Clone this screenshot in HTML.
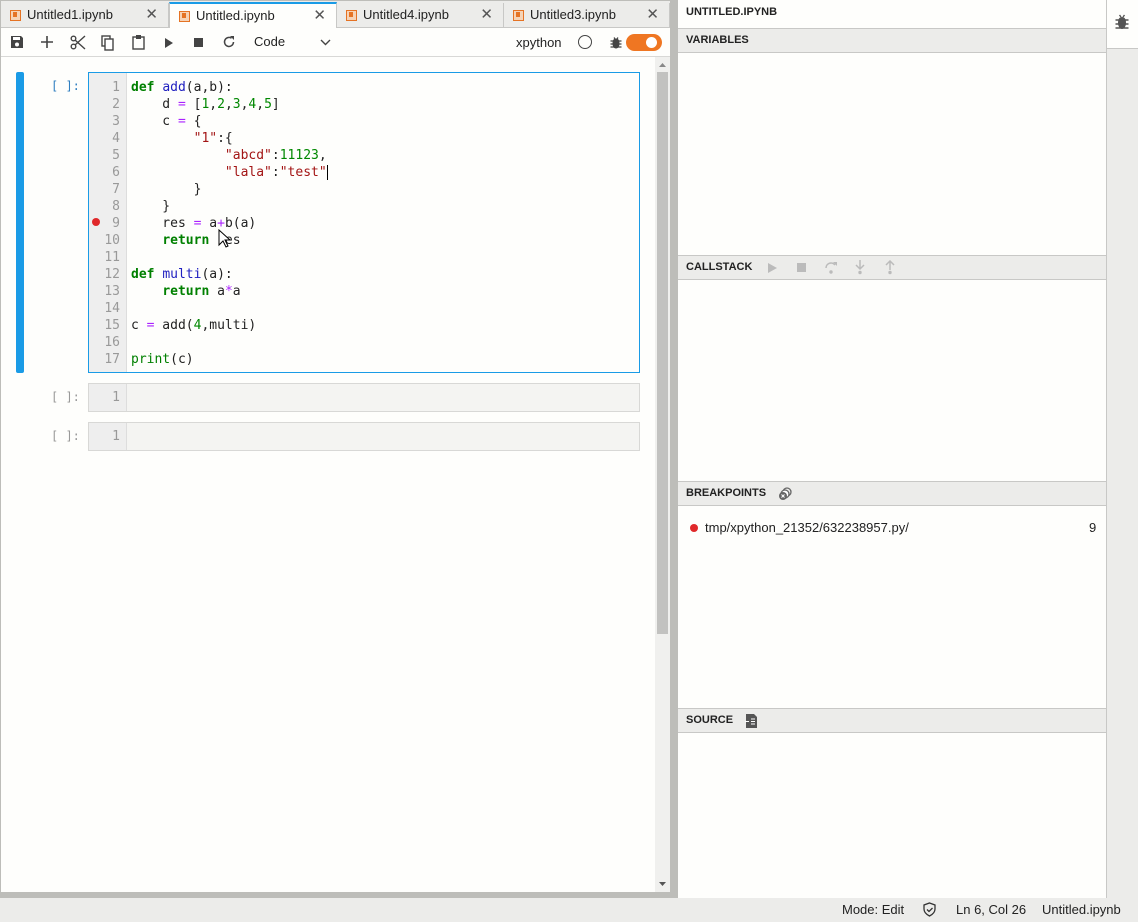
<!DOCTYPE html>
<html><head><meta charset="utf-8"><style>
*{box-sizing:border-box;margin:0;padding:0}
body{width:1138px;height:922px;background:#bdbdb9;font-family:"Liberation Sans",sans-serif;font-size:13px;color:#222;position:relative;overflow:hidden}
.abs{position:absolute}
.nb{left:1px;top:1px;width:669px;height:891px;background:#fefefc}
.tabs{left:0;top:0;width:669px;height:27px;background:#ececea;border-bottom:1px solid #c8c8c6}
.tab{position:absolute;top:2px;height:26px;border-right:1px solid #c8c8c6;font-size:13px;line-height:24px;padding-left:26px}
.tab .ic{position:absolute;left:9px;top:7px;width:11px;height:11px;border:1.5px solid #e57324;background:#f6d3b6}
.tab .ic:after{content:"";position:absolute;left:2px;top:1px;width:4px;height:5px;background:#e57324}
.tab .x{position:absolute;right:10px;top:0;font-size:15px;color:#555}
.tb{left:0;top:27px;width:669px;height:29px;border-bottom:1px solid #d8d8d6;background:#fefefc}
.code{font-family:"DejaVu Sans Mono","Liberation Mono",monospace;font-size:13px;line-height:17px;white-space:pre}
.k{color:#008000;font-weight:bold}.f{color:#2020c0}.n{color:#008800}.s{color:#a31515}.o{color:#aa22ff}
.hdr{position:absolute;left:678px;width:428px;height:25px;background:#ececea;border-top:1px solid #c8c8c6;border-bottom:1px solid #c8c8c6;font-size:11px;font-weight:bold;line-height:23px;padding-left:8px;color:#222}
</style></head><body>
<div class="abs nb">
 <div class="abs tabs">
  <div class="tab" style="left:0;width:168px;top:2px;border-left:none"><span class="ic"></span>Untitled1.ipynb<span class="x">✕</span></div>
  <div class="tab" style="left:168px;width:168px;background:#fefefc;border-top:2px solid #1a9be6;top:1px;height:27px;border-left:1px solid #c8c8c6"><span class="ic"></span>Untitled.ipynb<span class="x">✕</span></div>
  <div class="tab" style="left:336px;width:167px"><span class="ic"></span>Untitled4.ipynb<span class="x">✕</span></div>
  <div class="tab" style="left:503px;width:166px"><span class="ic"></span>Untitled3.ipynb<span class="x">✕</span></div>
 </div>
 <div class="abs tb">
  <svg class="abs" style="left:9px;top:7px" width="14" height="14" viewBox="0 0 14 14"><path d="M1 1h10l2 2v10H1z" fill="#444"/><rect x="3" y="2" width="7" height="3" fill="#fff"/><circle cx="7" cy="9.5" r="2" fill="#fff"/></svg>
  <svg class="abs" style="left:40px;top:8px" width="12" height="12"><path d="M6 0v12M0 6h12" stroke="#444" stroke-width="1.6"/></svg>
  <svg class="abs" style="left:69px;top:7px" width="16" height="15" viewBox="0 0 16 15"><circle cx="3.5" cy="11.5" r="2.3" fill="none" stroke="#444" stroke-width="1.4"/><circle cx="3.5" cy="3.5" r="2.3" fill="none" stroke="#444" stroke-width="1.4"/><path d="M5 5l10 9M5 10l10-9" stroke="#444" stroke-width="1.4"/></svg>
  <svg class="abs" style="left:100px;top:7px" width="14" height="16"><rect x="1" y="1" width="8" height="10" fill="none" stroke="#444" stroke-width="1.4"/><rect x="4" y="4" width="8" height="11" fill="#fff" stroke="#444" stroke-width="1.4"/></svg>
  <svg class="abs" style="left:131px;top:6px" width="14" height="16"><rect x="1" y="3" width="11" height="12" fill="none" stroke="#444" stroke-width="1.4"/><rect x="4" y="1" width="5" height="4" fill="#444"/></svg>
  <svg class="abs" style="left:163px;top:10px" width="10" height="10"><path d="M1 0l8 5-8 5z" fill="#444"/></svg>
  <div class="abs" style="left:193px;top:10px;width:9px;height:9px;background:#444"></div>
  <svg class="abs" style="left:221px;top:7px" width="14" height="14" viewBox="0 0 14 14"><path d="M11.5 7A4.5 4.5 0 1 1 9.5 3.2" fill="none" stroke="#444" stroke-width="1.5"/><path d="M8 1h4v4z" fill="#444"/></svg>
  <div class="abs" style="left:253px;top:6px;font-size:13px">Code</div>
  <svg class="abs" style="left:319px;top:11px" width="11" height="7"><path d="M1 1l4.5 4.5L10 1" fill="none" stroke="#444" stroke-width="1.4"/></svg>
  <div class="abs" style="left:515px;top:7px;font-size:13px">xpython</div>
  <div class="abs" style="left:577px;top:7px;width:14px;height:14px;border:1.5px solid #444;border-radius:50%"></div>
  <svg class="abs" style="left:609px;top:8px" width="12" height="13" viewBox="0 0 12 13"><path d="M6 2.5C3.5 2.5 2.5 4.5 2.5 7.5S4 12.5 6 12.5 9.5 10.5 9.5 7.5 8.5 2.5 6 2.5z" fill="#444"/><path d="M0.5 5h11M0.5 8h11M0.5 11h11" stroke="#444" stroke-width="1.3"/><path d="M4 1.5l1 1.5M8 1.5l-1 1.5" stroke="#444" stroke-width="1.2"/></svg>
  <div class="abs" style="left:625px;top:6px;width:36px;height:17px;background:#ef7622;border-radius:9px"><div class="abs" style="right:5px;top:3px;width:11px;height:11px;border-radius:50%;background:#fff"></div></div>
 </div>
 <div class="abs" style="left:654px;top:56px;width:15px;height:835px;background:#f0f0ee"></div>
 <div class="abs" style="left:656px;top:71px;width:11px;height:562px;background:#c2c2c0"></div>
 <svg class="abs" style="left:657px;top:61px" width="9" height="6"><path d="M1 5l3.5-4 3.5 4z" fill="#888"/></svg>
 <svg class="abs" style="left:657px;top:880px" width="9" height="6"><path d="M1 1l3.5 4 3.5-4z" fill="#555"/></svg>

 <div class="abs" style="left:15px;top:71px;width:8px;height:301px;background:#1a9be6;border-radius:2px"></div>
 <div class="abs code" style="left:50px;top:77px;color:#307fc1;font-size:12px">[ ]:</div>
 <div class="abs" style="left:87px;top:71px;width:552px;height:301px;border:1px solid #1a9be6;background:#fefefc">
  <div class="abs" style="left:0;top:0;width:38px;height:299px;background:#eeeeee;border-right:1px solid #ddd"></div>
  <div class="abs code" style="left:0;top:6px;width:31px;text-align:right;color:#999">1
2
3
4
5
6
7
8
9
10
11
12
13
14
15
16
17</div>
  <div class="abs" style="left:3px;top:145px;width:8px;height:8px;border-radius:50%;background:#e0282a"></div>
  <div class="abs code" style="left:42px;top:6px;color:#222"><span class="k">def</span> <span class="f">add</span>(a,b):
    d <span class="o">=</span> [<span class="n">1</span>,<span class="n">2</span>,<span class="n">3</span>,<span class="n">4</span>,<span class="n">5</span>]
    c <span class="o">=</span> {
        <span class="s">"1"</span>:{
            <span class="s">"abcd"</span>:<span class="n">11123</span>,
            <span class="s">"lala"</span>:<span class="s">"test"</span><span style="border-left:1px solid #000"></span>
        }
    }
    res <span class="o">=</span> a<span class="o">+</span>b(a)
    <span class="k">return</span> res

<span class="k">def</span> <span class="f">multi</span>(a):
    <span class="k">return</span> a<span class="o">*</span>a

c <span class="o">=</span> add(<span class="n">4</span>,multi)

<span style="color:#008000">print</span>(c)</div>
  <svg class="abs" style="left:129px;top:156px" width="14" height="20"><path d="M1 1v15l4-4 3 6 2-1-3-6h5z" fill="#fff" stroke="#000" stroke-width="1"/></svg>
 </div>

 <div class="abs code" style="left:50px;top:388px;color:#999;font-size:12px">[ ]:</div>
 <div class="abs" style="left:87px;top:382px;width:552px;height:29px;border:1px solid #d8d8d6;background:#f4f4f2">
  <div class="abs" style="left:0;top:0;width:38px;height:27px;background:#eeeeee;border-right:1px solid #ddd"></div>
  <div class="abs code" style="left:0;top:5px;width:31px;text-align:right;color:#999">1</div>
 </div>
 <div class="abs code" style="left:50px;top:427px;color:#999;font-size:12px">[ ]:</div>
 <div class="abs" style="left:87px;top:421px;width:552px;height:29px;border:1px solid #d8d8d6;background:#f4f4f2">
  <div class="abs" style="left:0;top:0;width:38px;height:27px;background:#eeeeee;border-right:1px solid #ddd"></div>
  <div class="abs code" style="left:0;top:5px;width:31px;text-align:right;color:#999">1</div>
 </div>
</div>

<div class="abs" style="left:678px;top:0;width:428px;height:898px;background:#fefefc"></div>
<div class="abs" style="left:686px;top:6px;font-size:11px;font-weight:bold">UNTITLED.IPYNB</div>
<div class="hdr" style="top:28px">VARIABLES</div>
<div class="hdr" style="top:255px">CALLSTACK
 <svg class="abs" style="left:90px;top:7px" width="9" height="10"><path d="M0 0l9 5-9 5z" fill="#bbb"/></svg>
 <div class="abs" style="left:119px;top:7px;width:9px;height:9px;background:#bbb"></div>
 <svg class="abs" style="left:146px;top:4px" width="14" height="15"><path d="M2 8a5 5 0 0 1 9-3" fill="none" stroke="#bbb" stroke-width="1.5"/><path d="M9 2h4v4z" fill="#bbb"/><circle cx="7" cy="12" r="1.7" fill="#bbb"/></svg>
 <svg class="abs" style="left:177px;top:4px" width="10" height="15"><path d="M5 0v8M1 5l4 4 4-4" fill="none" stroke="#bbb" stroke-width="1.5"/><circle cx="5" cy="12.5" r="1.7" fill="#bbb"/></svg>
 <svg class="abs" style="left:207px;top:4px" width="10" height="15"><path d="M5 10V1M1 5l4-4 4 4" fill="none" stroke="#bbb" stroke-width="1.5"/><circle cx="5" cy="12.5" r="1.7" fill="#bbb"/></svg>
</div>
<div class="hdr" style="top:481px">BREAKPOINTS
 <svg class="abs" style="left:100px;top:5px" width="14" height="14"><circle cx="9" cy="5" r="4" fill="none" stroke="#666" stroke-width="1.3"/><circle cx="7" cy="7" r="4" fill="#fff" stroke="#666" stroke-width="1.3"/><circle cx="5" cy="9" r="4" fill="#666"/><path d="M3.5 7.5l3 3M6.5 7.5l-3 3" stroke="#fff" stroke-width="1"/></svg>
</div>
<div class="abs" style="left:690px;top:524px;width:8px;height:8px;border-radius:50%;background:#e0282a"></div>
<div class="abs" style="left:705px;top:520px">tmp/xpython_21352/632238957.py/</div>
<div class="abs" style="left:1089px;top:520px">9</div>
<div class="hdr" style="top:708px">SOURCE
 <svg class="abs" style="left:67px;top:5px" width="13" height="14"><path d="M1 0h8l3 3v11H1z" fill="#555"/><path d="M6 5h4M6 7.5h4M6 10h4" stroke="#fff" stroke-width="1"/><path d="M0 7.5h4" stroke="#fff" stroke-width="1"/></svg>
</div>

<div class="abs" style="left:1106px;top:0;width:32px;height:898px;background:#ececea;border-left:1px solid #c8c8c6"></div>
<div class="abs" style="left:1107px;top:0;width:31px;height:49px;background:#fefefc;border-bottom:1px solid #c8c8c6"></div>
<svg class="abs" style="left:1115px;top:14px" width="14" height="16" viewBox="0 0 14 16"><path d="M7 3C4 3 3 5.5 3 9s2 6 4 6 4-2.5 4-6-1-6-4-6z" fill="#555"/><path d="M0.5 6h13M0.5 10h13M0.5 14h13" stroke="#555" stroke-width="1.5"/><path d="M4.5 1l1.5 2M9.5 1L8 3" stroke="#555" stroke-width="1.4"/></svg>

<div class="abs" style="left:0;top:898px;width:1138px;height:24px;background:#ececea"></div>
<div class="abs" style="left:842px;top:902px">Mode: Edit</div>
<svg class="abs" style="left:922px;top:902px" width="15" height="15" viewBox="0 0 15 15"><path d="M7.5 1l5.5 2v4c0 3.5-2.5 5.5-5.5 7C4.5 12.5 2 10.5 2 7V3z" fill="none" stroke="#333" stroke-width="1.3"/><path d="M5 7.5l2 2 3.5-3.5" fill="none" stroke="#333" stroke-width="1.3"/></svg>
<div class="abs" style="left:956px;top:902px">Ln 6, Col 26</div>
<div class="abs" style="left:1042px;top:902px">Untitled.ipynb</div>
</body></html>
